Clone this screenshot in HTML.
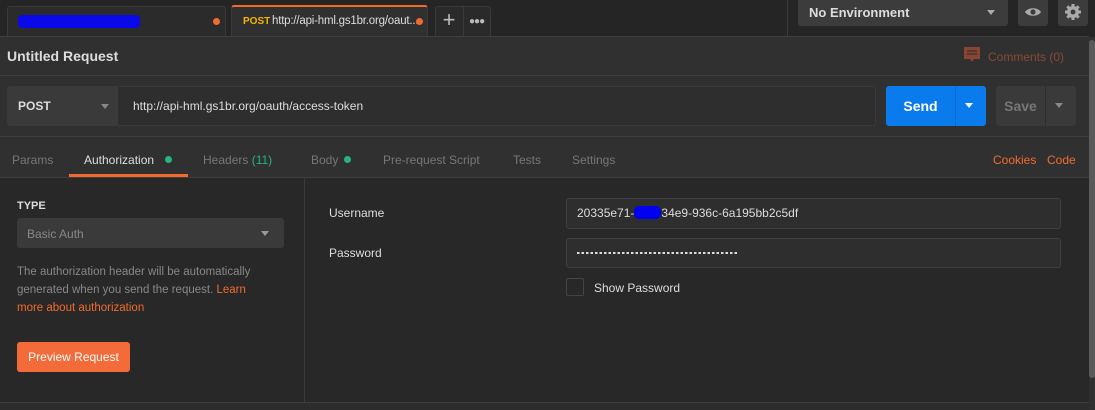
<!DOCTYPE html>
<html><head><meta charset="utf-8"><style>
*{box-sizing:border-box;margin:0;padding:0}
body{width:1095px;height:410px;overflow:hidden;background:#282828;font-family:"Liberation Sans",sans-serif;font-size:12px;color:#ccc;position:relative}
.a{position:absolute}
.line{position:absolute;background:#3d3d3d;height:1px}
</style></head><body>
<div class="a" style="left:0;top:0;width:1095px;height:37px;background:#252525"></div>
<div class="a" style="left:7px;top:6px;width:219px;height:31px;background:#2b2b2b;border:1px solid #3a3a3a;border-bottom:none;border-radius:3px 3px 0 0"></div>
<div class="a" style="left:18px;top:15px;width:122px;height:13px;background:#0a0ae8;border-radius:4px"></div>
<div class="a" style="left:213px;top:18px;width:7px;height:7px;border-radius:50%;background:#f26b2d"></div>
<div class="a" style="left:231px;top:5px;width:197px;height:32px;background:#303030;border:1px solid #3a3a3a;border-top:2px solid #f26b2d;border-bottom:none;border-radius:3px 3px 0 0"></div>
<div class="a" style="left:243px;top:16px;font-size:10px;color:#f4b400;font-weight:bold">POST</div>
<div class="a" style="left:272px;top:15px;font-size:11.5px;color:#ddd;letter-spacing:-0.2px">http://api-hml.gs1br.org/oaut...</div>
<div class="a" style="left:416px;top:18px;width:7px;height:7px;border-radius:50%;background:#f26b2d"></div>
<div class="a" style="left:435px;top:6px;width:56px;height:31px;border:1px solid #3a3a3a;border-bottom:none;border-radius:3px 3px 0 0;background:#2a2a2a"></div>
<div class="a" style="left:463px;top:6px;width:1px;height:31px;background:#3a3a3a"></div>
<div class="a" style="left:441px;top:9px;width:16px;font-size:22px;color:#bbb;text-align:center;line-height:22px">+</div>
<div class="a" style="left:469px;top:20px;width:18px;font-size:10px;color:#bbb;letter-spacing:-1px;line-height:4px">●●●</div>
<div class="a" style="left:787px;top:0;width:1px;height:37px;background:#3a3a3a"></div>
<div class="a" style="left:798px;top:0;width:210px;height:26px;background:#3c3c3c;border-radius:0 0 3px 3px"></div>
<div class="a" style="left:809px;top:5px;font-weight:bold;font-size:13px;color:#ddd">No Environment</div>
<div class="a" style="left:987px;top:10px;border:4px solid transparent;border-top:5px solid #aaa"></div>
<div class="a" style="left:1018px;top:0;width:30px;height:26px;background:#3c3c3c;border-radius:0 0 3px 3px"></div>
<svg class="a" style="left:1024px;top:5px" width="18" height="14" viewBox="0 0 18 14"><path d="M1 7C4 2 14 2 17 7C14 12 4 12 1 7Z" fill="#aaa"/><circle cx="9" cy="7" r="2.6" fill="#3c3c3c"/></svg>
<div class="a" style="left:1058px;top:0;width:30px;height:26px;background:#3c3c3c;border-radius:0 0 3px 3px"></div>
<svg class="a" style="left:1064px;top:3px" width="18" height="18" viewBox="0 0 18 18"><circle cx="9" cy="9" r="6" fill="#aaa"/><g stroke="#aaa" stroke-width="3"><path d="M9 1v16M1 9h16M3.3 3.3l11.4 11.4M14.7 3.3L3.3 14.7"/></g><circle cx="9" cy="9" r="2.5" fill="#3c3c3c"/></svg>
<div class="a" style="left:0;top:37px;width:1089px;height:140px;background:#303030"></div>
<div class="line" style="left:0;top:36px;width:1089px"></div>
<div class="a" style="left:7px;top:48px;font-size:14px;font-weight:bold;color:#ddd">Untitled Request</div>
<svg class="a" style="left:963px;top:46px" width="18" height="18" viewBox="0 0 18 18"><path d="M1 1h16v12h-6l-2 3-2-3H1Z" fill="#8a4530"/><path d="M4 5h10M4 8h10" stroke="#303030" stroke-width="1.3"/></svg>
<div class="a" style="left:988px;top:50px;font-size:12px;color:#8a4a33">Comments (0)</div>
<div class="line" style="left:0;top:75px;width:1089px"></div>
<div class="a" style="left:7px;top:86px;width:110px;height:40px;background:#3a3a3a;border-radius:3px 0 0 3px"></div>
<div class="a" style="left:18px;top:99px;font-weight:bold;font-size:12px;color:#ddd">POST</div>
<div class="a" style="left:101px;top:104px;border:4px solid transparent;border-top:5px solid #888"></div>
<div class="a" style="left:117px;top:86px;width:759px;height:40px;background:#2e2e2e;border:1px solid #3a3a3a;border-radius:0 3px 3px 0"></div>
<div class="a" style="left:133px;top:99px;font-size:12px;color:#ddd">http://api-hml.gs1br.org/oauth/access-token</div>
<div class="a" style="left:886px;top:86px;width:100px;height:40px;background:#097bed;border-radius:3px"></div>
<div class="a" style="left:955px;top:86px;width:1px;height:40px;background:#0a6ad0"></div>
<div class="a" style="left:886px;top:98px;width:69px;text-align:center;font-weight:bold;font-size:14px;color:#fff">Send</div>
<div class="a" style="left:965px;top:103px;border:4px solid transparent;border-top:5px solid #fff"></div>
<div class="a" style="left:996px;top:86px;width:80px;height:40px;background:#3a3a3a;border-radius:3px"></div>
<div class="a" style="left:1045px;top:86px;width:1px;height:40px;background:#2e2e2e"></div>
<div class="a" style="left:996px;top:98px;width:49px;text-align:center;font-weight:bold;font-size:14px;color:#777">Save</div>
<div class="a" style="left:1055px;top:103px;border:4px solid transparent;border-top:5px solid #888"></div>
<div class="line" style="left:0;top:136px;width:1089px"></div>
<div class="a" style="top:153px;left:12px;color:#777">Params</div>
<div class="a" style="top:153px;left:84px;color:#ddd">Authorization</div>
<div class="a" style="left:165px;top:156px;width:7px;height:7px;border-radius:50%;background:#26b47f"></div>
<div class="a" style="top:153px;left:203px;color:#777">Headers <span style="color:#26b47f">(11)</span></div>
<div class="a" style="top:153px;left:311px;color:#777">Body</div>
<div class="a" style="left:344px;top:156px;width:7px;height:7px;border-radius:50%;background:#26b47f"></div>
<div class="a" style="top:153px;left:383px;color:#777">Pre-request Script</div>
<div class="a" style="top:153px;left:513px;color:#777">Tests</div>
<div class="a" style="top:153px;left:572px;color:#777">Settings</div>
<div class="a" style="top:153px;left:993px;color:#f26b2d">Cookies</div>
<div class="a" style="top:153px;left:1047px;color:#f26b2d">Code</div>
<div class="a" style="left:69px;top:174px;width:119px;height:3px;background:#f26b2d"></div>
<div class="line" style="left:0;top:177px;width:1089px"></div>
<div class="a" style="left:304px;top:178px;width:1px;height:224px;background:#3a3a3a"></div>
<div class="a" style="left:17px;top:200px;font-size:11px;font-weight:bold;color:#ddd">TYPE</div>
<div class="a" style="left:17px;top:218px;width:267px;height:30px;background:#3a3a3a;border-radius:3px"></div>
<div class="a" style="left:27px;top:227px;color:#888">Basic Auth</div>
<div class="a" style="left:261px;top:231px;border:4px solid transparent;border-top:5px solid #999"></div>
<div class="a" style="left:17px;top:263px;width:242px;font-size:11.5px;line-height:18px;color:#888">The authorization header will be automatically generated when you send the request. <span style="color:#f26b2d">Learn more about authorization</span></div>
<div class="a" style="left:17px;top:342px;width:113px;height:30px;background:#f26b39;border-radius:3px;color:#fff;font-size:12px;text-align:center;line-height:30px">Preview Request</div>
<div class="a" style="left:329px;top:206px;color:#ddd">Username</div>
<div class="a" style="left:329px;top:246px;color:#ddd">Password</div>
<div class="a" style="left:566px;top:198px;width:495px;height:31px;background:#2e2e2e;border:1px solid #404040;border-radius:3px"></div>
<div class="a" style="left:577px;top:206px;color:#ddd">20335e71-<span style="display:inline-block;width:27px;height:13px;background:#0000f0;vertical-align:-2px;border-radius:5px"></span>34e9-936c-6a195bb2c5df</div>
<div class="a" style="left:566px;top:238px;width:495px;height:30px;background:#2e2e2e;border:1px solid #404040;border-radius:3px"></div>
<div class="a" style="left:577px;top:252px;width:162px;height:2px;background:repeating-linear-gradient(90deg,#ddd 0,#ddd 2.5px,transparent 2.5px,transparent 4.5px)"></div>
<div class="a" style="left:566px;top:278px;width:18px;height:18px;border:1px solid #444;border-radius:2px"></div>
<div class="a" style="left:594px;top:281px;color:#ddd">Show Password</div>
<div class="line" style="left:0;top:402px;width:1089px"></div>
<div class="a" style="left:0;top:403px;width:1089px;height:7px;background:#2c2c2c"></div>
<div class="a" style="left:1089px;top:37px;width:6px;height:373px;background:#303030"></div>
<div class="a" style="left:1089px;top:40px;width:6px;height:338px;background:#5a5a5a;border-radius:3px"></div>
</body></html>
